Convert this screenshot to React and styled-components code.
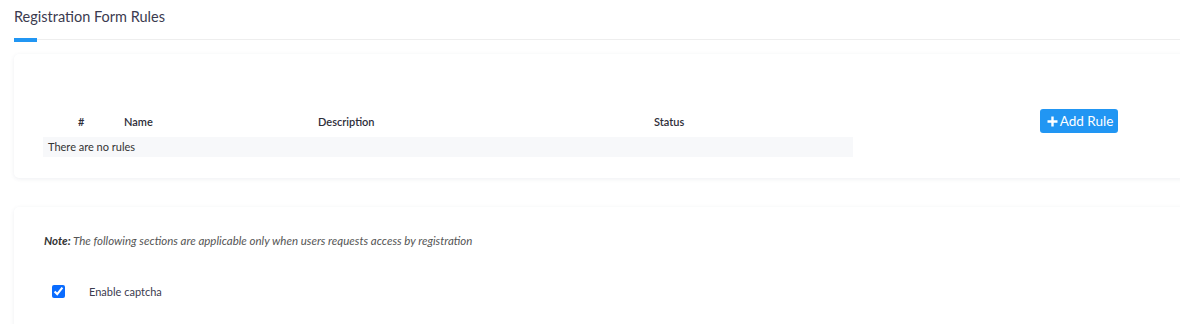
import React, { useState } from "react";
import styled, { createGlobalStyle } from "styled-components";

const GlobalStyle = createGlobalStyle`
    body {
        margin: 0;
        background: #fff;
        font-family: Lato, "Open Sans", sans-serif;
        color: #333;
        overflow: hidden;
    }
`;

const Page = styled.div`
    padding-left: 14px;
    width: 1200px;
`;

const TabHeader = styled.div`
    position: relative;
    height: 39px;
    border-bottom: 1px solid #eeeeee;
`;

const Title = styled.div`
    padding-top: 8px;
    font-size: 14.5px;
    line-height: 18px;
    color: #3b3b4f;
`;

const Indicator = styled.div`
    position: absolute;
    left: 0;
    bottom: -3px;
    width: 23px;
    height: 4px;
    background: #2196f3;
`;

const Card = styled.div`
    margin-top: ${props => props.top}px;
    background: #fff;
    border-radius: 5px;
    box-shadow: 0 1px 4px rgba(40, 50, 90, 0.08);
    padding: ${props => props.pad};
`;

const RulesRow = styled.div`
    display: flex;
    align-items: flex-start;
`;

const Table = styled.div`
    width: 810px;
    font-size: 11px;
`;

const HeadRow = styled.div`
    display: grid;
    grid-template-columns: 81px 194px 336px 1fr;
    height: 24px;
    align-items: center;
    margin-bottom: 4px;
    font-weight: 600;
    color: #2e2e3a;
`;

const HeadCell = styled.div`
    padding-left: ${props => props.indent || 0}px;
`;

const EmptyRow = styled.div`
    height: 20px;
    line-height: 20px;
    background: #f7f8fa;
    padding-left: 5px;
    color: #333;
`;

const AddButton = styled.button`
    margin-left: 187px;
    height: 24px;
    width: 78px;
    display: flex;
    align-items: center;
    justify-content: center;
    gap: 2px;
    border: none;
    border-radius: 3px;
    background: #2196f3;
    color: #fff;
    font-family: Lato, sans-serif;
    font-size: 13.5px;
    padding: 0 0 0 2px;
    cursor: pointer;
`;

const Note = styled.div`
    font-size: 11.5px;
    line-height: 16px;
    font-style: italic;
    color: #555;
    b {
        color: #333;
    }
`;

const CheckRow = styled.label`
    display: flex;
    align-items: center;
    margin-top: 36px;
    padding-left: 8px;
    font-size: 11px;
    color: #3b3b4f;
    input {
        margin: 0 24px 0 0;
        width: 13px;
        height: 13px;
        accent-color: #0a6cff;
    }
`;

const PlusIcon = () => (
    <svg width="11" height="11" viewBox="0 0 11 11">
        <path d="M5.5 0.5v10M0.5 5.5h10" stroke="#fff" strokeWidth="2.4" />
    </svg>
);

const App = () => {
    const [captcha, setCaptcha] = useState(true);
    return (
        <Page>
            <GlobalStyle />
            <TabHeader>
                <Title>Registration Form Rules</Title>
                <Indicator />
            </TabHeader>
            <Card top={14} pad="55px 0 21px 29px">
                <RulesRow>
                    <Table>
                        <HeadRow>
                            <HeadCell indent={35}>#</HeadCell>
                            <HeadCell>Name</HeadCell>
                            <HeadCell>Description</HeadCell>
                            <HeadCell>Status</HeadCell>
                        </HeadRow>
                        <EmptyRow>There are no rules</EmptyRow>
                    </Table>
                    <AddButton><PlusIcon />Add Rule</AddButton>
                </RulesRow>
            </Card>
            <Card top={29} pad="26px 0 40px 30px">
                <Note><b>Note:</b> The following sections are applicable only when users requests access by registration</Note>
                <CheckRow>
                    <input type="checkbox" checked={captcha} onChange={e => setCaptcha(e.target.checked)} />
                    Enable captcha
                </CheckRow>
            </Card>
        </Page>
    );
};

export default App;
